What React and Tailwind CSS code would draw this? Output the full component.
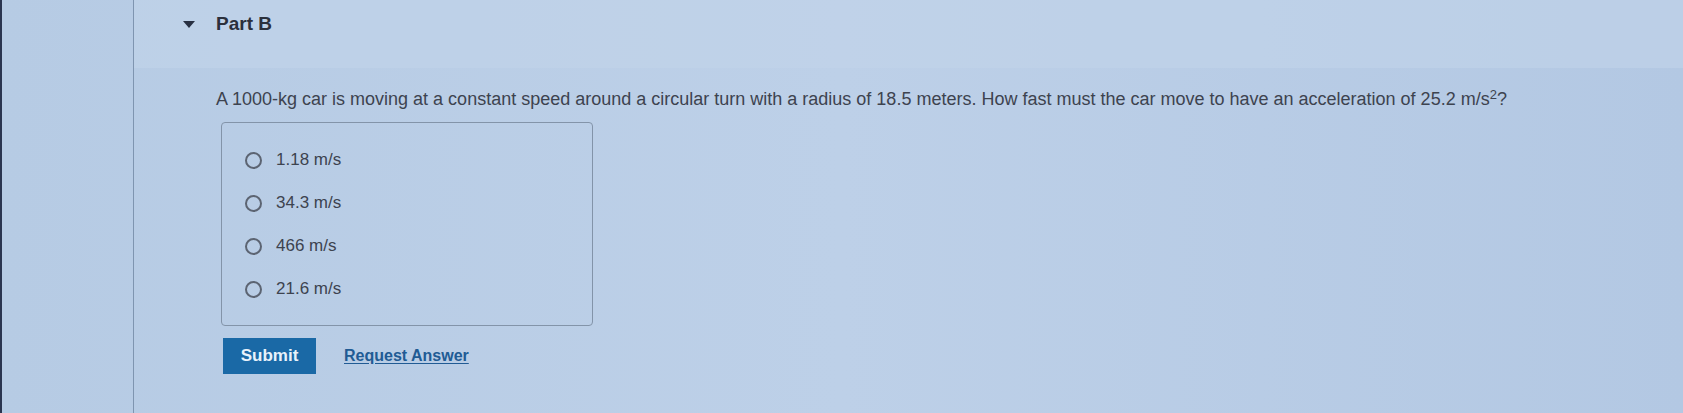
import React from 'react';

const options = ['1.18 m/s', '34.3 m/s', '466 m/s', '21.6 m/s'];

const App = () => {
    return (
        <div
            className="w-[1683px] h-[413px] flex bg-gradient-to-r from-[#b6cbe4] via-[#bdd0e8] to-[#b3c8e3] text-[#3d434f] overflow-hidden"
            style={{ fontFamily: '"Liberation Sans", Arial, sans-serif' }}
        >
            {/* left rail */}
            <div className="w-[134px] shrink-0 border-r border-[#7f95b0] border-l-2 border-l-[#2b3550]"></div>

            <div className="flex-1 flex flex-col">
                {/* part header */}
                <div className="h-[68px] flex items-start pl-[49px] pt-[12px] bg-[#c1d3ea]/60">
                    <span className="mt-[9px] w-0 h-0 border-l-[6px] border-r-[6px] border-t-[7px] border-l-transparent border-r-transparent border-t-[#283042]"></span>
                    <h3 className="ml-[21px] text-[19px] leading-[24px] font-bold text-[#2b303c]">Part B</h3>
                </div>

                <div className="pl-[82px] pt-[20px]">
                    <p className="text-[18px] leading-[22px]">
                        A 1000-kg car is moving at a constant speed around a circular turn with a radius of 18.5 meters. How fast must the car move to have an acceleration of 25.2 m/s<sup className="text-[13px]">2</sup>?
                    </p>

                    {/* answer choices */}
                    <div className="mt-[12px] ml-[5px] w-[372px] h-[204px] border border-[#8394a9] rounded-[4px] pt-[28px] pl-[23px] flex flex-col gap-[25px]">
                        {options.map((opt) => (
                            <label key={opt} className="flex items-center h-[18px]">
                                <span className="w-[17px] h-[17px] rounded-full border-2 border-[#5c6472] shrink-0"></span>
                                <span className="ml-[14px] text-[17px]">{opt}</span>
                            </label>
                        ))}
                    </div>

                    <div className="mt-[12px] flex items-center">
                        <button className="ml-[7px] w-[93px] h-[36px] bg-[#1a69a6] text-[#e8f2fb] text-[17px] font-semibold">
                            Submit
                        </button>
                        <a className="ml-[28px] text-[16px] font-bold text-[#215b94] underline underline-offset-2">
                            Request Answer
                        </a>
                    </div>
                </div>
            </div>
        </div>
    );
};

export default App;
